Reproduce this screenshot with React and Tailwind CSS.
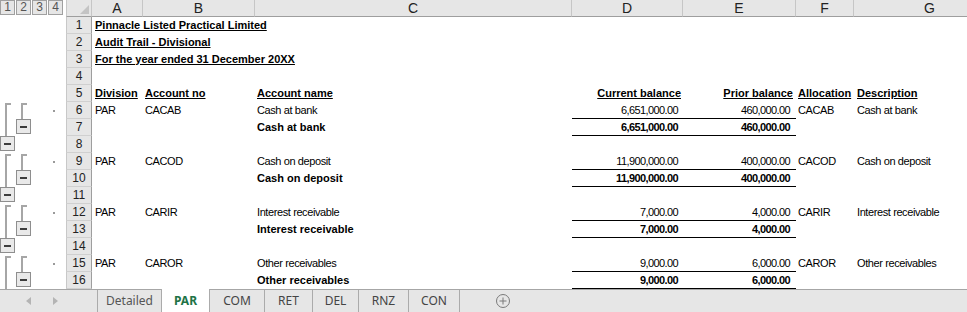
import React from 'react'

const COLS = [
  { key: 'a', label: 'A', w: 'w-[51px]' },
  { key: 'b', label: 'B', w: 'w-[112px]' },
  { key: 'c', label: 'C', w: 'w-[317px]' },
  { key: 'd', label: 'D', w: 'w-[111px]' },
  { key: 'e', label: 'E', w: 'w-[113px]' },
  { key: 'f', label: 'F', w: 'w-[58px]' },
  { key: 'g', label: 'G', w: 'w-[152px]' },
]

const GROUPS = [
  ['CACAB', 'Cash at bank', '6,651,000.00', '460,000.00'],
  ['CACOD', 'Cash on deposit', '11,900,000.00', '400,000.00'],
  ['CARIR', 'Interest receivable', '7,000.00', '4,000.00'],
  ['CAROR', 'Other receivables', '9,000.00', '6,000.00'],
]

const ROWS = [
  { n: 1, title: 'Pinnacle Listed Practical Limited' },
  { n: 2, title: 'Audit Trail - Divisional' },
  { n: 3, title: 'For the year ended 31 December 20XX' },
  { n: 4 },
  { n: 5, head: true },
]
GROUPS.forEach(([code, name, cur, prior], i) => {
  const n = 6 + i * 3
  ROWS.push({ n, kind: 'start', a: 'PAR', b: code, c: name, d: cur, e: prior, f: code, g: name })
  ROWS.push({ n: n + 1, kind: 'sub', total: true, c: name, d: cur, e: prior })
  if (n + 2 <= 16) ROWS.push({ n: n + 2, kind: 'end' })
})

const MinusBox = () => (
  <div className="w-[15px] h-[15px] border border-[#8e8e8e] bg-[#e9e9e9] flex items-center justify-center">
    <div className="w-[7px] h-[2px] bg-[#3c3c3c]" />
  </div>
)

function Outline({ kind }) {
  return (
    <div className="flex w-[66px] h-[17px] shrink-0">
      <div className="w-[16px] h-full">
        {kind === 'start' && <div className="ml-[5px] mt-px w-[6px] h-[16px] border-l-2 border-t-2 border-[#a6a6a6]" />}
        {kind === 'sub' && <div className="ml-[5px] w-0 h-full border-l-2 border-[#a6a6a6]" />}
        {kind === 'end' && <MinusBox />}
      </div>
      <div className="w-[16px] h-full">
        {kind === 'start' && <div className="ml-[5px] mt-px w-[6px] h-[16px] border-l-2 border-t-2 border-[#a6a6a6]" />}
        {kind === 'sub' && <MinusBox />}
      </div>
      <div className="flex-1 flex items-center">
        {kind === 'start' && <div className="ml-[21px] w-[2px] h-[2px] bg-[#9a9a9a]" />}
      </div>
    </div>
  )
}

const txt = 'text-[11px] tracking-[-0.4px]'
const num = 'text-[11px] tracking-[-0.6px]'

function Row({ row }) {
  const line = row.kind === 'start' || row.kind === 'sub'
  return (
    <div className="flex h-[17px] leading-[17px] text-black">
      <Outline kind={row.kind} />
      <div className="w-[26px] shrink-0 bg-[#e6e6e6] border-l border-l-[#c8c8c8] border-r border-r-[#9e9e9e] border-b border-b-[#d0d0d0] text-center text-[12px] leading-[16px] text-[#222]">
        {row.n}
      </div>
      {row.title && (
        <div className={`${COLS[0].w} shrink-0 pl-[3px] whitespace-nowrap text-[11px] font-bold underline`}>{row.title}</div>
      )}
      {row.head && (
        <>
          <div className="w-[51px] shrink-0 pl-[3px] whitespace-nowrap text-[11px] font-bold underline">Division</div>
          <div className="w-[112px] shrink-0 pl-[2px] whitespace-nowrap text-[11px] font-bold underline">Account no</div>
          <div className="w-[317px] shrink-0 pl-[2px] whitespace-nowrap text-[11px] font-bold underline">Account name</div>
          <div className="w-[111px] shrink-0 pr-[2px] text-right whitespace-nowrap text-[11px] font-bold underline">Current balance</div>
          <div className="w-[113px] shrink-0 pr-[3px] text-right whitespace-nowrap text-[11px] font-bold underline">Prior balance</div>
          <div className="w-[58px] shrink-0 pl-[2px] whitespace-nowrap text-[11px] font-bold underline">Allocation</div>
          <div className="w-[152px] shrink-0 pl-[3px] whitespace-nowrap text-[11px] font-bold underline">Description</div>
        </>
      )}
      {row.kind && row.kind !== 'end' && (
        <>
          <div className={`w-[51px] shrink-0 pl-[3px] whitespace-nowrap ${txt}`}>{row.a}</div>
          <div className={`w-[112px] shrink-0 pl-[2px] whitespace-nowrap ${txt}`}>{row.b}</div>
          <div className={`w-[317px] shrink-0 pl-[2px] whitespace-nowrap ${row.total ? 'text-[11px] font-bold' : txt}`}>{row.c}</div>
          <div className={`w-[111px] shrink-0 pr-[5px] text-right whitespace-nowrap ${num} ${row.total ? 'font-bold' : ''} ${line ? 'border-b border-black' : ''}`}>{row.d}</div>
          <div className={`w-[113px] shrink-0 pr-[6px] text-right whitespace-nowrap ${num} ${row.total ? 'font-bold' : ''} ${line ? 'border-b border-black' : ''}`}>{row.e}</div>
          <div className={`w-[58px] shrink-0 pl-[2px] whitespace-nowrap ${txt}`}>{row.f}</div>
          <div className={`w-[152px] shrink-0 pl-[3px] whitespace-nowrap ${txt}`}>{row.g}</div>
        </>
      )}
    </div>
  )
}

const TABS = [
  { label: 'COM', w: 'w-[54px]' },
  { label: 'RET', w: 'w-[48px]' },
  { label: 'DEL', w: 'w-[46px]' },
  { label: 'RNZ', w: 'w-[50px]' },
  { label: 'CON', w: 'w-[52px]' },
]

export default function App() {
  return (
    <div className="w-[967px] h-[312px] overflow-hidden bg-white flex flex-col font-['Liberation_Sans',Arial,sans-serif]">
      <div className="h-[289px] overflow-hidden">
        {/* column header row */}
        <div className="flex h-[17px]">
          <div className="w-[66px] shrink-0 flex gap-px">
            {[1, 2, 3, 4].map(l => (
              <div key={l} className="w-[15px] h-[15px] border border-[#a0a0a0] bg-[#e6e6e6] text-[12px] leading-[13px] text-center text-[#555]">{l}</div>
            ))}
          </div>
          <div className="w-[26px] shrink-0 bg-[#e6e6e6] border-l border-l-[#c8c8c8] border-r border-r-[#c6c6c6] border-b border-b-[#9e9e9e] flex items-end justify-end pr-[2px] pb-[2px]">
            <svg width="9" height="9" viewBox="0 0 9 9"><polygon points="9,0 9,9 0,9" fill="#c4c4c4" /></svg>
          </div>
          {COLS.map(c => (
            <div key={c.key} className={`${c.w} shrink-0 bg-[#e6e6e6] border-r border-r-[#c6c6c6] border-b border-b-[#9e9e9e] text-center text-[14px] leading-[16px] text-[#222]`}>{c.label}</div>
          ))}
        </div>
        {ROWS.map(r => <Row key={r.n} row={r} />)}
      </div>

      {/* sheet tabs */}
      <div className="h-[23px] flex border-t border-[#a6a6a6] bg-[#e6e6e6] font-['Noto_Sans',sans-serif] text-[12px] text-[#444]">
        <div className="w-[97px] shrink-0 flex items-center">
          <svg className="ml-[26px]" width="5" height="8" viewBox="0 0 5 8"><polygon points="5,0 5,8 0,4" fill="#b4b4b4" /></svg>
          <svg className="ml-[22px]" width="5" height="8" viewBox="0 0 5 8"><polygon points="0,0 0,8 5,4" fill="#b4b4b4" /></svg>
        </div>
        <div className="w-[64px] shrink-0 border-l border-[#ababab] flex items-center justify-center text-[#555]">Detailed</div>
        <div className="w-[49px] shrink-0 -mt-px h-[23px] bg-white border-x border-[#ababab] flex items-center justify-center font-bold text-[#217346]">PAR</div>
        {TABS.map((t, i) => (
          <div key={t.label} className={`${t.w} shrink-0 flex items-center justify-center ${i === TABS.length - 1 ? 'border-r border-[#ababab]' : ''} ${i > 0 ? 'border-l border-[#ababab]' : ''}`}>{t.label}</div>
        ))}
        <div className="ml-[35px] flex items-center">
          <svg width="16" height="16" viewBox="0 0 16 16">
            <circle cx="8" cy="8" r="6.5" fill="none" stroke="#7a7a7a" strokeWidth="1" />
            <path d="M8 4.5v7M4.5 8h7" stroke="#7a7a7a" strokeWidth="1" />
          </svg>
        </div>
      </div>
    </div>
  )
}
